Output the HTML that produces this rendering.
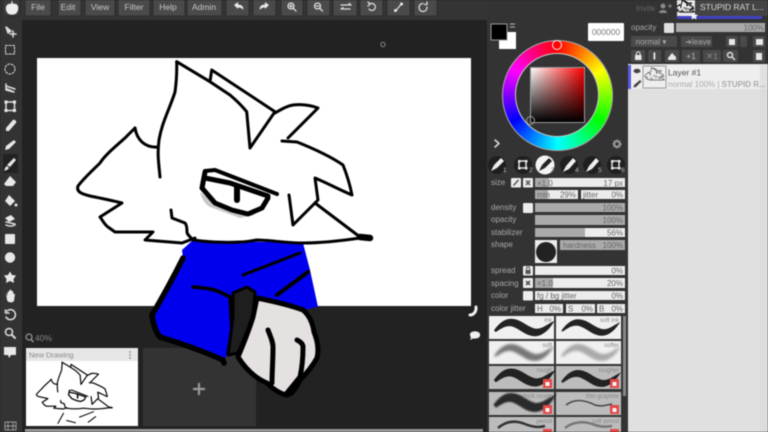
<!DOCTYPE html>
<html><head><meta charset="utf-8"><style>
html,body{margin:0;padding:0;width:768px;height:432px;overflow:hidden;background:#222}
#r{position:relative;width:768px;height:432px;filter:blur(.45px);font-family:"Liberation Sans",sans-serif}
#r>svg{position:absolute;left:0;top:0}
text{font-family:"Liberation Sans",sans-serif}
.m{font-size:8.5px;fill:#c8c8c8;text-anchor:middle}
.l{font-size:8px;fill:#a8a8a8}
.v{font-size:8px;fill:#666;text-anchor:end}
.s{font-size:8px;fill:#666}
.b{font-size:6px;fill:#888;text-anchor:end}
.i{fill:none;stroke:#ddd;stroke-width:1.5;stroke-linecap:round;stroke-linejoin:round}
.f{fill:#e8e8e8}
.w{stroke-width:var(--w,3)}
#wheel{position:absolute;left:502px;top:39.500px;width:111px;height:111px;border-radius:50%;box-sizing:border-box;border:1px solid #aaa;background:conic-gradient(#f00,#ff0 60deg,#0f0 120deg,#0ff 180deg,#00f 240deg,#f0f 300deg,#f00)}
#hole{position:absolute;left:515px;top:53px;width:84px;height:84px;border-radius:50%;background:#333;border:1px solid #ccc;box-sizing:border-box}
#sq{position:absolute;left:530px;top:67px;width:55px;height:56px;border:1px solid #999;box-sizing:border-box;background:linear-gradient(to bottom,rgba(0,0,0,0),#000),linear-gradient(to right,#fff,#f00)}
.k{position:absolute;border:1.5px solid #fff;border-radius:50%;box-sizing:border-box;width:10px;height:10px}
</style></head><body><div id="r">
<svg width="768" height="432" viewBox="0 0 768 432">
<defs>
<path id="st" d="M6,15C11,8 16,4 22,4C32,4 38,13 47,14C54,14 58,10 62,8C58,14 52,19 46,19C36,19 30,10 22,9C16,8 11,12 6,15Z"/>
<g id="L" class="w" fill="none" stroke="#000" stroke-linejoin="round" stroke-linecap="round">
<path d="M176.700,61.700C177,75 176,85 175,92C170,108 162,122 159,140C157,155 159,165 160,177"/>
<path d="M176.700,61.700L210,81.700L230,95C236,100 242,106 246.700,111.700L250,148L275,111.700L211.700,70L210,81.700"/>
<path d="M275,113C282,109 287,106 293,105C302,104 310,105 318,108L288,138"/>
<path d="M282,141L297,142C312,148 330,156 343,165C347,175 350,185 352,195C340,190 327,183 315,178L318,200L293,225L289,195"/>
<path d="M315,203L360,237"/>
<path d="M360,238C340,241 320,243 303,243C285,243 270,240 257,240C250,241 245,242 240,242C225,243 208,242 193,240C189,236 187,234 187,232C187,226 186,224 185,223L172,218L171,210"/>
<path d="M135,128L125,138C115,147 105,155 100,163C92,171 84,178 78,186C76,192 82,194 90,196C100,198 110,200 122,203L100,217C103,221 105,225 108,227L115,232L153,232L145,240L182,243L195,238"/>
<path d="M135,128C137,140 145,148 158,147"/>
<path d="M360,237L370,238" style="stroke-width:6.500"/>
<path d="M205,172L202,188L215,203L232,210L248,214L262,208L268,198" style="stroke-width:5"/>
<path d="M205,171L215,170L277,194" style="stroke-width:4"/>
<path d="M205,178L230,183L268,196" style="stroke-width:5"/>
<path d="M237,187L237,200" style="stroke-width:6"/>
</g>
</defs>

<!-- base -->
<rect width="768" height="432" fill="#222"/>
<rect width="768" height="20" fill="#343434"/>
<rect width="22" height="432" fill="#333"/>
<rect x="487" y="0" width="281" height="432" fill="#333"/>
<rect x="628" y="64" width="140" height="368" fill="#e0e0e0"/>
<rect x="760" y="89" width="8" height="343" fill="#dcdcdc"/>

<!-- add card (under drawing) -->
<rect x="143" y="348" width="113" height="78" fill="#333"/>
<path d="M199,383V395M193,389H205" stroke="#999" stroke-width="2.200"/>

<!-- canvas -->
<rect x="37" y="58" width="434" height="248" fill="#fff"/>
<path d="M200,192C202,200 206,205 210,207L240,218L255,215L240,212L215,203Z" fill="#c8c8c8"/>
<path d="M193,240L182,250L183,258L152,315L160,337L223,362L228,353L233,293L250,287L257,298L303,310L318,307L310,270L303,243Z" fill="#0000ee"/>
<path d="M210,182L230,185L263,195L265,203L247,212L230,207L208,192Z" fill="#fff"/>
<use href="#L"/>
<g fill="none" stroke="#000" stroke-linejoin="round" stroke-linecap="round">
<path d="M183,258C172,280 162,298 152,315C153,325 156,332 160,337C180,343 205,352 223,360L224,363" stroke-width="5.500"/>
<path d="M193,287C205,288 213,289 220,292L230,297L232,330L228,353" stroke-width="3.500"/>
<path d="M243,275L300,253" stroke-width="3"/>
<path d="M277,295L308,272" stroke-width="4"/>
<path d="M233,293L247,287L255,292L253,317L238,353L228,355L233,317Z" fill="#1e1e1e" stroke-width="3"/>
<path d="M257,298C272,301 290,305 303,310C310,316 313,325 314,332C318,342 319,350 317,358C312,367 305,375 300,380C296,388 292,395 286,395C278,393 272,388 267,383C255,378 245,368 238,357C243,345 249,330 253,317Z" fill="#e6e1e1" stroke-width="5"/>
<path d="M268,330C271,338 273,342 273,347C273,360 272,372 272,383" stroke-width="5"/>
<path d="M297,340C301,342 303,344 303,347C303,358 302,368 300,377L287,393" stroke-width="5"/>
</g>
<circle cx="383" cy="44.500" r="2.200" fill="none" stroke="#888" stroke-width="1"/>

<!-- top buttons -->
<g fill="#4a4a4a" stroke="#2c2c2c" stroke-width="1">
<rect x="3" y="-2" width="17" height="18" rx="1" fill="#3c3c3c"/>
<rect x="25" y="-2" width="26" height="18" rx="1"/><rect x="58" y="-2" width="23" height="18" rx="1"/>
<rect x="85" y="-2" width="30" height="18" rx="1"/><rect x="118" y="-2" width="32" height="18" rx="1"/>
<rect x="153" y="-2" width="32" height="18" rx="1"/><rect x="187" y="-2" width="35" height="18" rx="1"/>
<rect x="226" y="-2" width="23" height="18" rx="1"/><rect x="253" y="-2" width="23" height="18" rx="1"/>
<rect x="281" y="-2" width="22" height="18" rx="1"/><rect x="307" y="-2" width="23" height="18" rx="1"/>
<rect x="333" y="-2" width="24" height="18" rx="1"/><rect x="360" y="-2" width="23" height="18" rx="1"/>
<rect x="387" y="-2" width="23" height="18" rx="1"/><rect x="414" y="-2" width="23" height="18" rx="1"/>
</g>
<path d="M12,0L13,4C17,3 19,6 18,10C17,14 14,15 12,14.500C10,15 7,14 6,10C5,6 8,3 11,4Z" fill="#eee"/>
<text class="m" x="38" y="10">File</text><text class="m" x="68" y="10">Edit</text><text class="m" x="100" y="10">View</text>
<text class="m" x="134" y="10">Filter</text><text class="m" x="168" y="10">Help</text><text class="m" x="204" y="10">Admin</text>
<path d="M234,5L238,2L238,4.500C242,4.500 244,7 243,10C242,8 240,7.500 238,7.500L238,9Z" class="f"/>
<path d="M269,5L265,2L265,4.500C261,4.500 259,7 260,10C261,8 263,7.500 265,7.500L265,9Z" class="f"/>
<g class="i" style="stroke-width:1.300"><circle cx="291" cy="6" r="3"/><path d="M293.500,8.500L296,11M289.700,6H292.300M291,4.700V7.300"/>
<circle cx="317.500" cy="6" r="3"/><path d="M320,8.500L322.500,11M316.200,6H318.800"/>
<path d="M341,5H351M349,3.500L351,5M350,9H341M343,7.500L341,9"/>
<path d="M369,4A3.500,3.500 0 1 1 368,9M367,2L369,4L367,6" transform="translate(1,0)"/>
<path d="M396,10.500L401,4.500"/>
<path d="M423,3.500A4,4 0 1 0 427,7M427,2V4.500H424.500"/>
</g>
<circle cx="395.500" cy="10.500" r="1.500" class="f"/><circle cx="401.500" cy="4" r="1.500" class="f"/>

<!-- left tools -->
<rect x="3" y="154" width="15" height="19" fill="#222"/>
<g class="i">
<path d="M6,27L11,31L8,33Z" fill="#ddd"/><path d="M10,34H16M13,31V37"/>
<rect x="5.500" y="45.500" width="9" height="8.500" stroke-dasharray="2 1.500" stroke-width="1"/>
<circle cx="10" cy="69" r="5" stroke-dasharray="2 1.500" stroke-width="1"/>
<path d="M6,84L6,90L14,92M6,86L15,89M7,89L14,92"/>
<rect x="6" y="102" width="8.500" height="8.500"/>
</g>
<g class="f">
<rect x="4.500" y="100.500" width="3" height="3"/><rect x="13" y="100.500" width="3" height="3"/><rect x="4.500" y="109" width="3" height="3"/><rect x="13" y="109" width="3" height="3"/>
<path d="M12,121L15,124L9,131L6,131L6,128Z"/><circle cx="14" cy="122" r="2.200"/>
<path d="M14,140L16,142L9,149L5,150L6,146Z"/>
<path d="M14,158L16,160L10,167L7,165Z"/><path d="M7,166L9,168C8,170 6,170 4,171C5,169 5,167 7,166Z"/>
<path d="M10,176L16,182L13,186H6L4,184Z"/>
<path d="M9,195L15,201L10,206L5,201Z"/><circle cx="16" cy="205" r="1.500"/>
<path d="M5,218L11,215L15,219L9,222Z"/>
<rect x="5" y="234" width="10" height="10" rx="1"/>
<circle cx="10" cy="257.500" r="5.200"/>
<path d="M10,271.500L12,275L16,275.500L13.500,279L14,283L10,281L6,283L6.500,279L4,275.500L8,275Z"/>
<path d="M6,293L7,300C8,303 13,303 14,301L15,294L13.500,294L13,291L11.500,291L11,289.500L9.500,290L9,291.500L7.500,292L7.500,296Z"/>
<path d="M4,347H16V355H11L9,358L8,355H4Z"/>
</g>
<g class="i">
<path d="M6,225C10,227 13,226 15,225M6,222L15,224" />
<path d="M7,311A5,5 0 1 1 6,317M5.500,310V313H9"/>
<circle cx="9" cy="332" r="3.500"/><path d="M12,335L15,338" stroke-width="2"/>
<rect x="5" y="422" width="11" height="8" stroke="#999" stroke-width="1"/><path d="M8,422V430M13,422V430M5,426H16" stroke="#999" stroke-width="1"/>
</g>

<!-- color swatches -->
<rect x="499" y="32" width="17" height="17" fill="#fff"/>
<rect x="491" y="24" width="16" height="16" fill="#000" stroke="#999" stroke-width="1"/>
<path d="M510,24H515M510,27H515" stroke="#bbb" stroke-width="1"/>
<rect x="588" y="23" width="36" height="18" rx="1" fill="#fff"/>
<text x="606" y="35" font-size="8.500" fill="#777" text-anchor="middle">000000</text>
<path d="M495,140L499,143.500L495,147" class="i" stroke="#bbb"/>
<circle cx="617" cy="144" r="2.700" fill="none" stroke="#999" stroke-width="2"/>
<circle cx="617" cy="144" r="4" fill="none" stroke="#999" stroke-width="1.200" stroke-dasharray="1.500 1.500"/>

<!-- brush presets -->
<g fill="#1f1f1f">
<circle cx="497" cy="165" r="9"/><circle cx="523" cy="165" r="9"/><circle cx="569" cy="165" r="9"/><circle cx="592" cy="165" r="9"/><circle cx="616" cy="165" r="9"/>
</g>
<circle cx="545" cy="165" r="9.500" fill="#f4f4f4"/>
<g fill="#f0f0f0">
<path d="M501,158L504,161L497,168L494,165Z"/><path d="M494,165L497,168L491,171Z"/>
<path d="M573,158L576,161L569,169L566,166Z"/><path d="M566,166L569,169L563,172Z"/>
<path d="M596,158L599,161L592,169L589,166Z"/><path d="M589,166L592,169L586,172Z"/>
</g>
<path d="M549,158L552,161L545,168L542,165Z" fill="#222"/><path d="M542,165L545,168L539,171Z" fill="#222"/>
<g fill="none" stroke="#ddd" stroke-width="1.500"><rect x="519" y="161" width="7" height="7"/><rect x="612" y="161" width="7" height="7"/></g>
<g class="f"><rect x="518" y="160" width="2.500" height="2.500"/><rect x="525" y="160" width="2.500" height="2.500"/><rect x="518" y="167" width="2.500" height="2.500"/><rect x="525" y="167" width="2.500" height="2.500"/>
<rect x="611" y="160" width="2.500" height="2.500"/><rect x="618" y="160" width="2.500" height="2.500"/><rect x="611" y="167" width="2.500" height="2.500"/><rect x="618" y="167" width="2.500" height="2.500"/></g>
<g font-size="6.500" fill="#bbb"><text x="503" y="172">1</text><text x="529" y="172">2</text><text x="551" y="172" fill="#555">3</text><text x="575" y="172">4</text><text x="598" y="172">5</text><text x="621" y="172">6</text></g>

<!-- sliders -->
<g fill="#ececec">
<rect x="535" y="178" width="90" height="9"/><rect x="535" y="190" width="43" height="9"/><rect x="581" y="190" width="44" height="9"/>
<rect x="535" y="228" width="90" height="9"/><rect x="535" y="266" width="90" height="9"/><rect x="535" y="278" width="90" height="10"/>
<rect x="535" y="291" width="90" height="9"/><rect x="535" y="304" width="28" height="9"/><rect x="566" y="304" width="29" height="9"/><rect x="597" y="304" width="28" height="9"/>
<rect x="511" y="178" width="10" height="9.500" rx="1"/><rect x="523" y="178" width="10" height="9.500" rx="1"/>
<rect x="523" y="203" width="10" height="10" rx="1"/><rect x="523" y="266" width="10" height="9.500" rx="1"/><rect x="523" y="278" width="10" height="10" rx="1"/><rect x="523" y="291" width="10" height="9.500" rx="1"/>
</g>
<g fill="#aaa">
<rect x="535" y="178" width="14" height="9"/><rect x="535" y="190" width="13" height="9"/>
<rect x="535" y="203" width="90" height="9"/><rect x="535" y="215" width="90" height="10"/>
<rect x="535" y="228" width="50" height="9"/><rect x="560" y="240" width="65" height="10"/><rect x="535" y="278" width="18" height="10"/>
<rect x="676" y="23" width="89" height="9"/>
</g>
<rect x="535" y="240" width="22" height="23" fill="#ececec"/><circle cx="546" cy="252" r="10" fill="#222"/>
<path d="M513.500,185.500L518.500,180M526,180.500L530,185M530,180.500L526,185" stroke="#555" stroke-width="1.500" fill="none"/>
<path d="M526,281L530,285M530,281L526,285" stroke="#444" stroke-width="1.500"/>
<rect x="525.500" y="270" width="5" height="4" fill="#555"/><path d="M526.500,270V268.500A1.500,1.500 0 0 1 529.500,268.500V270" stroke="#555" fill="none"/>
<g class="l">
<text x="491" y="185">size</text><text x="491" y="210">density</text><text x="491" y="222">opacity</text><text x="491" y="235">stabilizer</text>
<text x="491" y="247">shape</text><text x="491" y="273">spread</text><text x="491" y="286">spacing</text><text x="491" y="298">color</text><text x="491" y="311">color jitter</text>
<text x="631" y="30">opacity</text>
</g>
<g class="s"><text x="537" y="186">×1.0</text><text x="537" y="197.500">min</text><text x="583" y="197.500">jitter</text><text x="563" y="248">hardness</text><text x="537" y="286">×1.0</text><text x="537" y="298.500">fg / bg jitter</text><text x="537" y="311.500">H</text><text x="568" y="311.500">S</text><text x="599" y="311.500">B</text></g>
<g class="v">
<text x="623" y="186">17 px</text><text x="576" y="197.500">29%</text><text x="623" y="197.500">0%</text><text x="623" y="210.500">100%</text><text x="623" y="223">100%</text><text x="623" y="235.500">56%</text><text x="623" y="248">100%</text><text x="623" y="273.500">0%</text><text x="623" y="286">20%</text><text x="623" y="298.500">0%</text><text x="561" y="311.500">0%</text><text x="593" y="311.500">0%</text><text x="623" y="311.500">0%</text>
<text x="764" y="30.500">100%</text>
</g>

<!-- brushes -->
<g fill="#f0f0f0"><rect x="489" y="316" width="65" height="23"/><rect x="556" y="316" width="65" height="23"/><rect x="489" y="341" width="65" height="23"/><rect x="556" y="341" width="65" height="23"/></g>
<g fill="#bcbcbc"><rect x="489" y="366" width="65" height="23"/><rect x="556" y="366" width="65" height="23"/><rect x="489" y="392" width="65" height="23"/><rect x="556" y="392" width="65" height="23"/><rect x="489" y="417" width="65" height="15"/><rect x="556" y="417" width="65" height="15"/></g>
<g fill="#222" stroke="#222" stroke-width="2.500">
<use href="#st" x="489" y="316"/><use href="#st" x="556" y="316" stroke-width="1.500"/>
<use href="#st" x="489" y="366" stroke-width="3"/><use href="#st" x="556" y="367" stroke-width="2"/>
</g>
<use href="#st" x="489" y="341" fill="#777" stroke="#777" stroke-width="2" style="filter:blur(1.300px)"/>
<use href="#st" x="556" y="341" fill="#aaa" stroke="#aaa" stroke-width="2" style="filter:blur(1.300px)"/>
<use href="#st" x="489" y="391" fill="#2a2a2a" stroke="#2a2a2a" stroke-width="4" style="filter:blur(.8px)"/>
<path d="M566,405C575,398 585,400 595,405C602,407 606,405 612,404" fill="none" stroke="#444" stroke-width="1.500"/>
<path d="M498,428C506,421 515,420 525,424C532,427 538,428 545,426" fill="none" stroke="#333" stroke-width="2.500"/>
<path d="M565,428C574,421 585,421 595,425C602,427 606,427 612,426" fill="none" stroke="#777" stroke-width="2.500"/>
<g class="b"><text x="552" y="322">ink</text><text x="619" y="322">soft ink</text><text x="552" y="347">soft</text><text x="619" y="347">softer</text><text x="552" y="372">rough</text><text x="619" y="372">rougher</text><text x="552" y="398">thick rough</text><text x="619" y="398">thin graphite</text><text x="552" y="423">pencil</text><text x="619" y="423">soft pencil</text></g>
<g fill="#e34848"><rect x="543" y="379" width="9" height="9"/><rect x="610" y="379" width="9" height="9"/><rect x="543" y="405" width="9" height="9"/><rect x="610" y="405" width="9" height="9"/><rect x="543" y="429" width="9" height="4"/><rect x="610" y="429" width="9" height="4"/></g>
<g fill="#f3f3f3"><rect x="545.500" y="382" width="4" height="4"/><rect x="612.500" y="382" width="4" height="4"/><rect x="545.500" y="408" width="4" height="4"/><rect x="612.500" y="408" width="4" height="4"/></g>
<rect x="623" y="316" width="3" height="80" fill="#888"/>

<!-- top right -->
<text x="636" y="11" font-size="8" fill="#666">Invite</text>
<circle cx="663" cy="6" r="2.500" fill="#888"/><path d="M659,13C659,9 667,9 667,13Z" fill="#888"/><path d="M668,6H672M670,4V8" stroke="#888"/>
<rect x="677" y="0" width="91" height="16" fill="#444"/><rect x="677" y="16" width="85" height="3" fill="#4141c4"/>
<rect x="677" y="0" width="18" height="16" fill="#e8e8e8"/>
<svg x="677" y="0" width="18" height="16" viewBox="100 60 270 240" style="--w:14"><use href="#L"/></svg>
<path d="M694,12L695.200,14.500L698,15L696,17L696.500,19.500L694,18.200L691.500,19.500L692,17L690,15L692.800,14.500Z" fill="#f2f2f2"/>
<text x="700" y="10" font-size="8.500" fill="#d8d8d8">STUPID RAT L...</text>

<rect x="664" y="23" width="10" height="10" rx="1" fill="#e0e0e0"/>
<g fill="#4a4a4a">
<rect x="631" y="36" width="46" height="11" rx="1"/><rect x="681" y="36" width="31" height="11" rx="1"/><rect x="726" y="36" width="12" height="11" rx="1"/><rect x="740" y="36" width="7" height="11" rx="1"/><rect x="753" y="36" width="12" height="11" rx="1"/>
<rect x="631" y="50" width="14" height="12" rx="1"/><rect x="648" y="50" width="13" height="12" rx="1"/><rect x="665" y="50" width="14" height="12" rx="1"/><rect x="682" y="50" width="18" height="12" rx="1"/><rect x="703" y="50" width="18" height="12" rx="1"/><rect x="723" y="50" width="15" height="12" rx="1"/><rect x="753" y="50" width="12" height="12" rx="1"/>
</g>
<text x="651" y="44.500" font-size="8" fill="#aaa" text-anchor="middle">normal ▾</text>
<text x="698" y="44.500" font-size="8" fill="#aaa" text-anchor="middle">➔leave</text>
<text x="691" y="59" font-size="8.500" fill="#bbb" text-anchor="middle">+1</text>
<text x="712" y="59" font-size="8.500" fill="#888" text-anchor="middle">✕1</text>
<g class="f">
<rect x="729" y="39" width="6" height="6"/><rect x="756" y="39" width="7" height="6"/>
<rect x="635" y="55" width="6.500" height="5"/>
<rect x="653.500" y="52.500" width="1.800" height="7"/>
<path d="M668,58L672,53L676,57L676,60H668Z"/>
<rect x="756" y="53" width="6" height="7"/>
</g>
<path d="M636.500,55V53.500A1.500,1.500 0 0 1 640,53.500V55" stroke="#e8e8e8" fill="none"/>
<circle cx="730" cy="55" r="2.500" class="i" stroke-width="1.200"/><path d="M732,57L734.500,59.500" class="i"/>

<!-- layer -->
<rect x="628" y="65" width="132" height="24" fill="#eee"/>
<rect x="628" y="65" width="3" height="24" fill="#5a5ae0"/>
<ellipse cx="637" cy="71" rx="3.500" ry="2.200" fill="#444"/>
<path d="M640,80L641.500,81.500L636,87L633.500,87.500L634,85Z" fill="#444"/>
<rect x="643" y="66" width="23" height="22" fill="#eee" stroke="#999" stroke-width="1"/>
<svg x="644" y="67" width="21" height="20" viewBox="70 55 300 286" style="--w:12" opacity=".55"><use href="#L"/></svg>
<text x="668" y="75.500" font-size="8.500" fill="#555">Layer #1</text>
<text x="668" y="87" font-size="8" fill="#aaa">normal 100% | <tspan font-weight="bold">STUPID R...</tspan></text>

<!-- bottom -->
<circle cx="29" cy="337" r="3" fill="none" stroke="#999" stroke-width="1.200"/><path d="M31,339.500L33.500,342" stroke="#999" stroke-width="1.400"/>
<text x="35" y="341" font-size="8.500" fill="#888">40%</text>
<rect x="26" y="348" width="112" height="78" fill="#fff"/>
<rect x="26" y="348" width="112" height="13" fill="#e6e6e6"/>
<text x="29" y="357.500" font-size="7.500" fill="#888">New Drawing</text>
<g fill="#888"><circle cx="130" cy="352" r=".9"/><circle cx="130" cy="355" r=".9"/><circle cx="130" cy="358" r=".9"/></g>
<svg x="26" y="361" width="112" height="65" viewBox="37 58 434 250" style="--w:4.500">
<use href="#L"/>
<g fill="none" stroke="#000" stroke-width="4"><path d="M183,258L160,300M243,275L300,253M277,295L308,272M193,287L230,297"/></g>
</svg>
<rect x="25" y="429" width="458" height="3" fill="#9a9a9a"/>
<path d="M476,307C476.500,311 474,315 470,315" fill="none" stroke="#f0f0f0" stroke-width="3" stroke-linecap="round"/>
<path d="M470,334C470,331 479,330 480,334C481,338 476,339 473,338.500L470,340L471,337.500C470,336.500 470,335 470,334Z" fill="#f0f0f0"/>
</svg>
<div id="wheel"></div><div id="hole"></div><div id="sq"></div>
<div class="k" style="left:552px;top:40px;border-color:#eee"></div>
<div class="k" style="left:526px;top:116px;border-color:#999;width:9px;height:9px"></div>
</div></body></html>
